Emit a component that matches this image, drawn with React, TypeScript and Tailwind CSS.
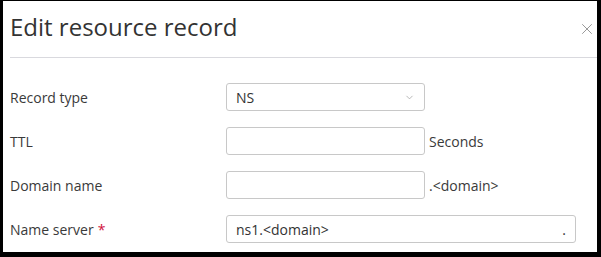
import { ChevronDown, X } from "lucide-react";

const font = { fontFamily: '"Open Sans", "Noto Sans", sans-serif' };

function Row({ label, required, children }: { label: string; required?: boolean; children: React.ReactNode }) {
  return (
    <div className="flex items-center h-[28px]">
      <div className="w-[216px] text-[14px] text-[#3a3a3a]">
        {label}
        {required && <span className="text-[#d0103a] ml-1">*</span>}
      </div>
      {children}
    </div>
  );
}

export default function App() {
  return (
    <div
      className="w-[601px] h-[257px] bg-white border-black border-l-[3px] border-t border-r-4 border-b-[5px] overflow-hidden"
      style={font}
    >
      <div className="ml-[7px] h-[57px] flex items-center justify-between border-b border-[#d9d9de]">
        <h1 className="text-[24px] text-[#333] leading-none pb-[4px]">Edit resource record</h1>
        <button className="mr-[1px] text-[#777]">
          <X size={18} strokeWidth={1} />
        </button>
      </div>

      <div className="pl-[7px] pt-[25px] flex flex-col gap-[16px]">
        <Row label="Record type">
          <div className="w-[199px] h-[28px] border border-[#c8c8c8] rounded-[3px] flex items-center justify-between px-[9px] text-[14px] text-[#333]">
            <span>NS</span>
            <ChevronDown size={11} className="text-[#999]" strokeWidth={1.5} />
          </div>
        </Row>
        <Row label="TTL">
          <div className="w-[199px] h-[28px] border border-[#c8c8c8] rounded-[3px]" />
          <span className="ml-[4px] text-[14px] text-[#3a3a3a]">Seconds</span>
        </Row>
        <Row label="Domain name">
          <div className="w-[199px] h-[28px] border border-[#c8c8c8] rounded-[3px]" />
          <span className="ml-[4px] text-[14px] text-[#3a3a3a]">.&lt;domain&gt;</span>
        </Row>
        <Row label="Name server" required>
          <div className="w-[350px] h-[28px] border border-[#c8c8c8] rounded-[3px] flex items-center justify-between px-[9px] text-[14px] text-[#333]">
            <span>ns1.&lt;domain&gt;</span>
            <span>.</span>
          </div>
        </Row>
      </div>
    </div>
  );
}
